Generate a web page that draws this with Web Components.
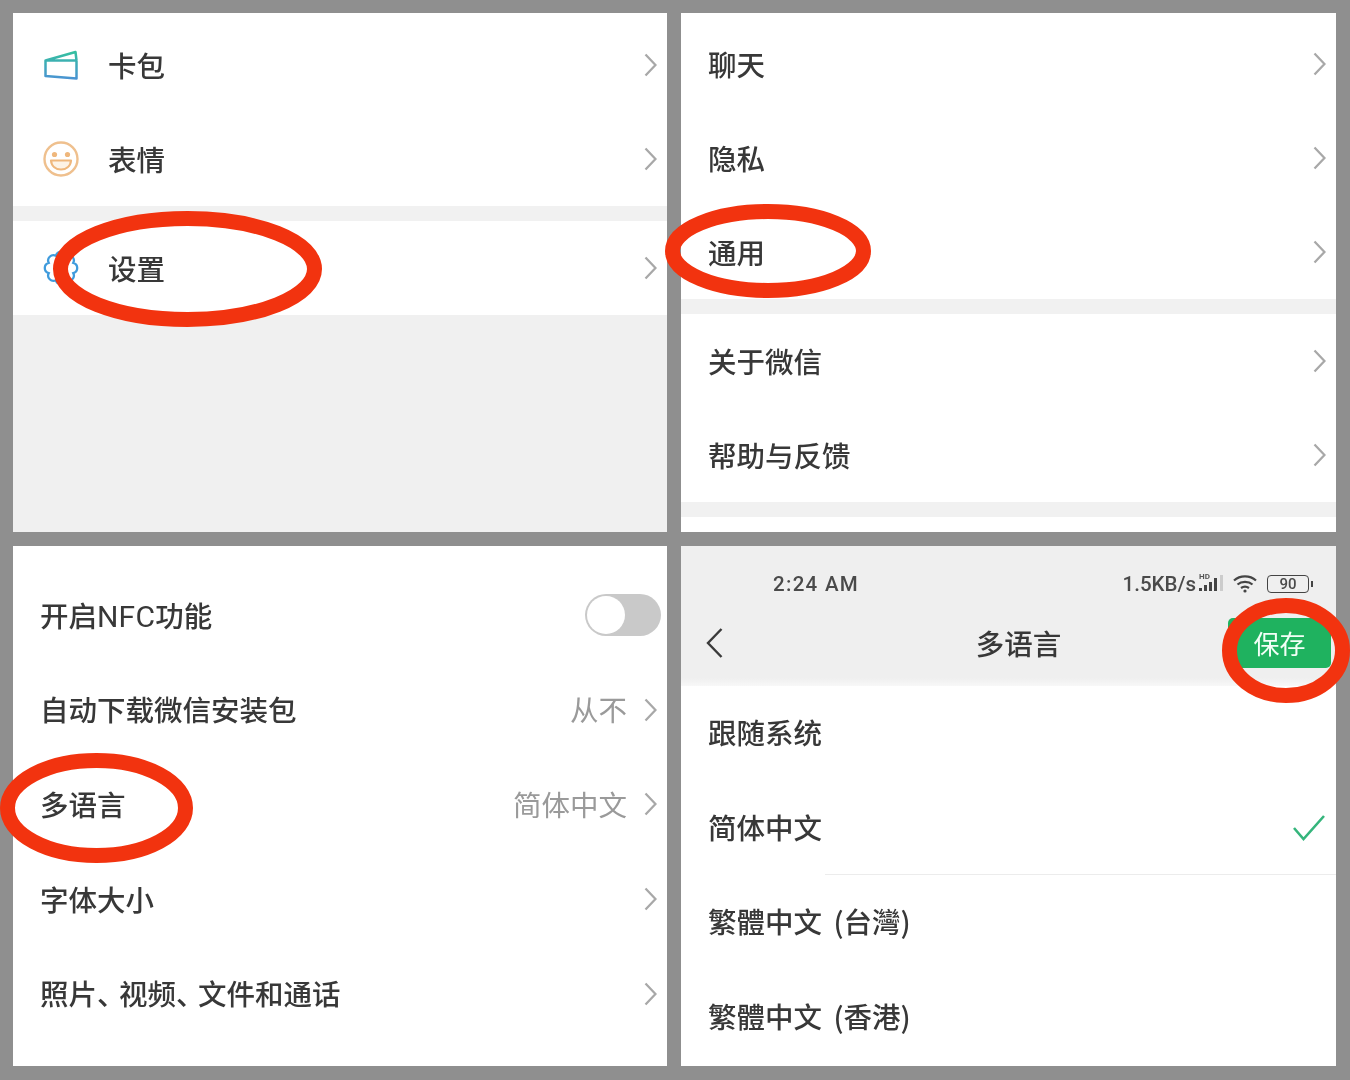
<!DOCTYPE html>
<html lang="zh">
<head>
<meta charset="utf-8">
<title>多语言</title>
<style>
  html, body { margin: 0; background: #8f8f8f; }
  body { font-family: "Noto Sans CJK SC", "Noto Sans", sans-serif; color: #333; }
</style>
</head>
<body>
<shot-grid>
  <phone-panel class="p1">
    <setting-row label="卡包" indent>
      <svg slot="icon" width="36" height="30" viewBox="0 0 36 30" fill="none">
        <defs><linearGradient id="w" x1="0" y1="0" x2="0" y2="1"><stop offset="0" stop-color="#35bfa0"/><stop offset="1" stop-color="#4a94d2"/></linearGradient></defs>
        <path d="M2.500 10.500H33.500V28.500L2.500 26ZM2.500 10.500L32.500 2L33.500 10.500" stroke="url(#w)" stroke-width="2.500" stroke-linejoin="round"/>
      </svg>
    </setting-row>
    <setting-row label="表情" indent>
      <svg slot="icon" width="36" height="36" viewBox="0 0 36 36" fill="none">
        <circle cx="18" cy="18" r="16.500" stroke="#efc08e" stroke-width="2.400"/>
        <circle cx="11.500" cy="13.500" r="2.600" fill="#efb77c"/><circle cx="24.500" cy="13.500" r="2.600" fill="#efb77c"/>
        <path d="M8 19.500H28C27.500 25.500 23 28.500 18 28.500S8.500 25.500 8 19.500Z" stroke="#efb77c" stroke-width="2.200" fill="#fdf3e6" stroke-linejoin="round"/>
      </svg>
    </setting-row>
    <band-gap></band-gap>
    <setting-row label="设置" indent>
      <svg slot="icon" width="36" height="36" viewBox="0 0 34 34" fill="none" style="overflow:visible">
        <path d="M29.900 11.600A5.600 5.600 0 0 0 22.400 4.100A5.600 5.600 0 0 0 11.600 4.100A5.600 5.600 0 0 0 4.100 11.600A5.600 5.600 0 0 0 4.100 22.400A5.600 5.600 0 0 0 11.600 29.900A5.600 5.600 0 0 0 22.400 29.900A5.600 5.600 0 0 0 29.900 22.400A5.600 5.600 0 0 0 29.900 11.600Z" transform="translate(1.700 1.700) scale(.9)" stroke="#3f9bdc" stroke-width="2.400"/>
        <circle cx="17" cy="17" r="4.500" stroke="#3f9bdc" stroke-width="2"/>
      </svg>
    </setting-row>
    <grey-fill></grey-fill>
  </phone-panel>

  <phone-panel class="p2">
    <setting-row label="聊天"></setting-row>
    <setting-row label="隐私"></setting-row>
    <setting-row label="通用"></setting-row>
    <band-gap></band-gap>
    <setting-row label="关于微信"></setting-row>
    <setting-row label="帮助与反馈"></setting-row>
    <band-gap></band-gap>
  </phone-panel>

  <phone-panel class="p3">
    <setting-row label="开启NFC功能" nochevron><nfc-toggle slot="end"></nfc-toggle></setting-row>
    <setting-row label="自动下载微信安装包" value="从不"></setting-row>
    <setting-row label="多语言" value="简体中文"></setting-row>
    <setting-row label="字体大小"></setting-row>
    <setting-row label="照片、视频、文件和通话"></setting-row>
  </phone-panel>

  <phone-panel class="p4">
    <lang-header></lang-header>
    <setting-row label="跟随系统" nochevron></setting-row>
    <setting-row label="简体中文" nochevron divided>
      <svg slot="end" width="34" height="28" viewBox="0 0 34 28" fill="none"><path d="M2 14L11.500 25L32 2" stroke="#35b57c" stroke-width="2.600"/></svg>
    </setting-row>
    <setting-row label="繁體中文 (台灣)" nochevron></setting-row>
    <setting-row label="繁體中文 (香港)" nochevron></setting-row>
  </phone-panel>
</shot-grid>

<ring-mark style="left:53px;top:211px;width:269px;height:116px"></ring-mark>
<ring-mark style="left:665px;top:204px;width:206px;height:94px"></ring-mark>
<ring-mark style="left:0;top:753px;width:193px;height:110px"></ring-mark>
<ring-mark style="left:1222px;top:598px;width:128px;height:105px"></ring-mark>

<script>
class ShotGrid extends HTMLElement {
  constructor() {
    super();
    this.attachShadow({ mode: 'open' });
    this.shadowRoot.innerHTML = `
      <style>
        :host {
          display: grid;
          grid-template-columns: 654px 655px;
          grid-template-rows: 519px 520px;
          gap: 14px;
          padding: 13px 14px 14px 13px;
          width: 1350px;
          height: 1080px;
          box-sizing: border-box;
        }
      </style>
      <slot></slot>
    `;
  }
}
customElements.define('shot-grid', ShotGrid);

class PhonePanel extends HTMLElement {
  constructor() {
    super();
    this.attachShadow({ mode: 'open' });
    this.shadowRoot.innerHTML = `
      <style>
        :host {
          display: flex;
          flex-direction: column;
          background: #fff;
          overflow: hidden;
          min-width: 0;
          filter: blur(.45px);
          --row-h: 94.6px;
          --label-up: 0px;
        }
        :host(.p1) { padding-top: 5px; --row-h: 94px; --label-up: 1px; }
        :host(.p2) { padding-top: 4px; --row-h: 94px; --label-up: 1px; }
        :host(.p3) { padding-top: 22px; --label-up: 2px; }
        :host(.p4) { --label-up: 3px; }
      </style>
      <slot></slot>
    `;
  }
}
customElements.define('phone-panel', PhonePanel);

class BandGap extends HTMLElement {
  constructor() {
    super();
    this.attachShadow({ mode: 'open' });
    this.shadowRoot.innerHTML = `<style>:host { display: block; height: 15px; background: #f1f1f1; flex: none; }</style>`;
  }
}
customElements.define('band-gap', BandGap);

class GreyFill extends HTMLElement {
  constructor() {
    super();
    this.attachShadow({ mode: 'open' });
    this.shadowRoot.innerHTML = `<style>:host { display: block; flex: 1; background: #f0f0f0; }</style>`;
  }
}
customElements.define('grey-fill', GreyFill);

class SettingRow extends HTMLElement {
  constructor() {
    super();
    this.attachShadow({ mode: 'open' });
  }

  connectedCallback() {
    const value = this.getAttribute('value');
    const label = this.getAttribute('label')
      .replace(/、/g, '<span class="punct">、</span>')
      .replace(/[A-Z]+/g, m => `<span class="latin">${m}</span>`);
    const chevron = this.hasAttribute('nochevron') ? '' : `
      <svg class="chev" width="13" height="24" viewBox="0 0 13 24" fill="none"><path d="M1.500 1.500L11.500 12L1.500 22.500" stroke="#a8a8a8" stroke-width="2.300"/></svg>`;
    this.shadowRoot.innerHTML = `
      <style>
        :host {
          display: flex;
          align-items: center;
          flex: none;
          position: relative;
          height: var(--row-h);
          padding: 0 10px 0 27px;
          background: #fff;
          font-size: 28.5px;
          font-weight: 500;
          color: #383838;
        }
        :host([indent]) { padding-left: 30px; }
        :host([divided])::after {
          content: "";
          position: absolute;
          left: 144px; right: 0; bottom: 0;
          height: 1px;
          background: #ececec;
        }
        .icon { display: none; width: 65px; align-items: center; }
        :host([indent]) .icon { display: flex; }
        .label { flex: 1; white-space: nowrap; word-spacing: 5px; padding-bottom: var(--label-up); }
        .latin { font-family: "Roboto", sans-serif; font-weight: 400; font-size: 30px; letter-spacing: .2px; }
        .punct { letter-spacing: -6.500px; }
        .value { color: #9a9a9a; margin-right: 17px; font-weight: 400; padding-bottom: var(--label-up); }
        .chev { display: block; }
      </style>
      <span class="icon"><slot name="icon"></slot></span>
      <span class="label">${label}</span>
      ${value ? `<span class="value">${value}</span>` : ''}
      <slot name="end"></slot>
      ${chevron}
    `;
  }
}
customElements.define('setting-row', SettingRow);

class NfcToggle extends HTMLElement {
  constructor() {
    super();
    this.attachShadow({ mode: 'open' });
    this.shadowRoot.innerHTML = `
      <style>
        :host {
          display: block;
          width: 76px;
          height: 42px;
          margin-right: -4px;
          padding: 2px;
          box-sizing: border-box;
          border-radius: 21px;
          background: #c9c9c9;
        }
        span {
          display: block;
          width: 38px;
          height: 38px;
          border-radius: 50%;
          background: #fff;
        }
      </style>
      <span></span>
    `;
  }
}
customElements.define('nfc-toggle', NfcToggle);

class LangHeader extends HTMLElement {
  constructor() {
    super();
    this.attachShadow({ mode: 'open' });
    this.shadowRoot.innerHTML = `
      <style>
        :host {
          display: block;
          flex: none;
          height: 140px;
          background: linear-gradient(#efefef 132px, #f8f8f8 140px);
          box-sizing: border-box;
          font-family: "Roboto", "Noto Sans", sans-serif;
        }
        .status {
          display: flex;
          align-items: center;
          height: 76px;
          padding: 0 27px 0 92px;
          font-size: 20.500px;
          font-weight: 500;
          color: #4a4a4a;
        }
        .time { flex: 1; letter-spacing: 1.300px; }
        .signal { margin: -4px 9px 0 1px; }
        .wifi { margin: -2px 10px 0 0; }
        .batt {
          display: flex;
          align-items: center;
          justify-content: center;
          width: 40px;
          height: 16px;
          border: 1.500px solid #444;
          border-radius: 4px;
          font-size: 15px;
          line-height: 1;
          position: relative;
        }
        .batt::after {
          content: "";
          position: absolute;
          right: -5px; top: 5px;
          width: 2px; height: 6px;
          background: #444;
        }
        .bar {
          display: flex;
          align-items: center;
          position: relative;
          height: 50px;
          margin-top: -4px;
          padding: 0 5px 0 25px;
          justify-content: space-between;
        }
        .title {
          position: absolute;
          left: 0; right: 0;
          top: 4px;
          padding-left: 20px;
          text-align: center;
          font: 500 28.500px "Noto Sans CJK SC", "Noto Sans", sans-serif;
          color: #383838;
        }
        .save {
          width: 103px;
          height: 50px;
          background: #1fb25f;
          border-radius: 5px;
          color: #f3fff7;
          font: 26px/49px "Noto Sans CJK SC", "Noto Sans", sans-serif;
          text-align: center;
        }
      </style>
      <div class="status">
        <span class="time">2:24 AM</span>
        <span class="speed">1.5KB/s</span>
        <svg class="signal" width="27" height="20" viewBox="0 0 27 20">
          <text x="2" y="7" font-family="Roboto, sans-serif" font-size="8" font-weight="700" fill="#555">HD</text>
          <rect x="2" y="16" width="3" height="3" fill="#444"/><rect x="7" y="13" width="3" height="6" fill="#444"/>
          <rect x="12" y="10" width="3" height="9" fill="#444"/><rect x="17" y="6" width="3" height="13" fill="#444"/>
          <rect x="23" y="3" width="3" height="16" fill="#ccc"/>
        </svg>
        <svg class="wifi" width="24" height="19" viewBox="0 0 24 19" fill="none" stroke="#444" stroke-width="2.200">
          <path d="M1 6.500C7 1 17 1 23 6.500M4.500 10.500C8.500 7 15.500 7 19.500 10.500M8 14C10.500 12.200 13.500 12.200 16 14"/>
          <circle cx="12" cy="17" r="1.600" fill="#444" stroke="none"/>
        </svg>
        <span class="batt">90</span>
      </div>
      <div class="bar">
        <svg width="17" height="30" viewBox="0 0 17 30" fill="none"><path d="M15.500 1L2 15L15.500 29" stroke="#3a3a3a" stroke-width="2.400"/></svg>
        <span class="title">多语言</span>
        <span class="save">保存</span>
      </div>
    `;
  }
}
customElements.define('lang-header', LangHeader);

class RingMark extends HTMLElement {
  constructor() {
    super();
    this.attachShadow({ mode: 'open' });
  }

  connectedCallback() {
    const w = parseFloat(this.style.width);
    const h = parseFloat(this.style.height);
    this.shadowRoot.innerHTML = `
      <style>
        :host { display: block; position: absolute; }
        svg { display: block; overflow: visible; filter: blur(.4px); }
      </style>
      <svg width="${w}" height="${h}" viewBox="0 0 ${w} ${h}" fill="none">
        <ellipse cx="${w / 2}" cy="${h / 2}" rx="${w / 2 - 7.500}" ry="${h / 2 - 7.500}" stroke="#f2330f" stroke-width="15"/>
      </svg>
    `;
  }
}
customElements.define('ring-mark', RingMark);
</script>
</body>
</html>
